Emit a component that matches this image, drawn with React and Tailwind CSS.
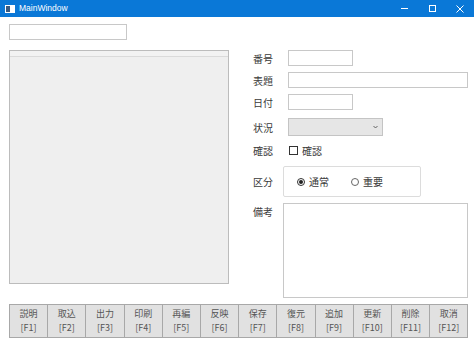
import React from "react";

const keys = [
  ["説明", "F1"], ["取込", "F2"], ["出力", "F3"], ["印刷", "F4"],
  ["再編", "F5"], ["反映", "F6"], ["保存", "F7"], ["復元", "F8"],
  ["追加", "F9"], ["更新", "F10"], ["削除", "F11"], ["取消", "F12"],
];

const font = { fontFamily: '"Noto Sans CJK JP", "Noto Sans", sans-serif' };

function Label({ children }) {
  return <span className="w-[35px] shrink-0 text-[10px] text-[#3a3a3a]">{children}</span>;
}

export default function App() {
  return (
    <div className="w-[474px] h-[348px] bg-white overflow-hidden flex flex-col" style={font}>
      {/* title bar */}
      <div className="h-[17px] bg-[#0a78d7] flex items-center text-white shrink-0">
        <div className="ml-[5px] w-[10px] h-[8px] bg-white border border-white flex">
          <div className="w-[4px] h-full bg-[#3b5b80]"></div>
        </div>
        <span className="ml-[4px] text-[8.5px]" style={{ fontFamily: '"Liberation Sans", sans-serif' }}>MainWindow</span>
        <div className="ml-auto flex items-center">
          <div className="w-[28px] flex justify-center"><div className="w-[7px] h-px bg-white"></div></div>
          <div className="w-[28px] flex justify-center"><div className="w-[7px] h-[7px] border border-white"></div></div>
          <div className="w-[28px] flex justify-center">
            <svg width="8" height="8" viewBox="0 0 8 8"><path d="M0.5 0.5L7.5 7.5M7.5 0.5L0.5 7.5" stroke="white" strokeWidth="1" /></svg>
          </div>
        </div>
      </div>

      <div className="flex">
        {/* left column */}
        <div className="ml-[9px] flex flex-col">
          <div className="mt-[7px] w-[118px] h-[16px] border border-[#c8c8c8] bg-white"></div>
          <div className="mt-[10px] w-[220px] h-[234px] border border-[#bcbcbc] bg-[#efefef] flex flex-col">
            <div className="h-[6px] border-b border-[#dadada] bg-[#f2f2f2]"></div>
          </div>
        </div>

        {/* right column */}
        <div className="ml-[24px] flex flex-col pt-[33px]">
          <div className="h-[16px] flex items-center">
            <Label>番号</Label>
            <div className="w-[65px] h-[16px] border border-[#c8c8c8]"></div>
          </div>
          <div className="mt-[6px] h-[16px] flex items-center">
            <Label>表題</Label>
            <div className="w-[180px] h-[16px] border border-[#c8c8c8]"></div>
          </div>
          <div className="mt-[6px] h-[16px] flex items-center">
            <Label>日付</Label>
            <div className="w-[65px] h-[16px] border border-[#c8c8c8]"></div>
          </div>
          <div className="mt-[8px] h-[18px] flex items-center">
            <Label>状況</Label>
            <div className="w-[95px] h-[18px] border border-[#c4c4c4] bg-[#e6e6e6] flex items-center justify-end pr-[4px]">
              <svg width="5" height="4" viewBox="0 0 5 4"><path d="M0.5 1L2.5 3L4.5 1" stroke="#555" fill="none" strokeWidth="0.9" /></svg>
            </div>
          </div>
          <div className="mt-[6px] h-[16px] flex items-center">
            <Label>確認</Label>
            <div className="ml-[1px] w-[9px] h-[9px] border border-[#333] bg-white"></div>
            <span className="ml-[4px] text-[10px] text-[#3a3a3a]">確認</span>
          </div>
          <div className="mt-[8px] flex items-center">
            <span className="w-[30px] shrink-0 text-[10px] text-[#3a3a3a]">区分</span>
            <div className="w-[138px] h-[31px] border border-[#dcdcdc] rounded-[2px] flex items-center">
              <div className="ml-[13px] w-[8px] h-[8px] rounded-full border border-[#333] flex items-center justify-center">
                <div className="w-[4px] h-[4px] rounded-full bg-[#222]"></div>
              </div>
              <span className="ml-[4px] text-[10px] text-[#3a3a3a]">通常</span>
              <div className="ml-[22px] w-[8px] h-[8px] rounded-full border border-[#666]"></div>
              <span className="ml-[4px] text-[10px] text-[#3a3a3a]">重要</span>
            </div>
          </div>
          <div className="mt-[6px] flex items-start">
            <span className="w-[30px] shrink-0 text-[10px] text-[#3a3a3a] mt-[1px]">備考</span>
            <div className="w-[185px] h-[95px] border border-[#c8c8c8]"></div>
          </div>
        </div>
      </div>

      {/* function keys */}
      <div className="mt-[6px] ml-[9px] flex">
        {keys.map(([name, key]) => (
          <div
            key={key}
            className="w-[39.2px] h-[34px] bg-[#e1e1e1] border border-[#a8a8a8] -ml-px first:ml-0 flex flex-col items-center justify-center leading-[14px] text-[9px] text-[#555]"
          >
            <span>{name}</span>
            <span>[{key}]</span>
          </div>
        ))}
      </div>
    </div>
  );
}
